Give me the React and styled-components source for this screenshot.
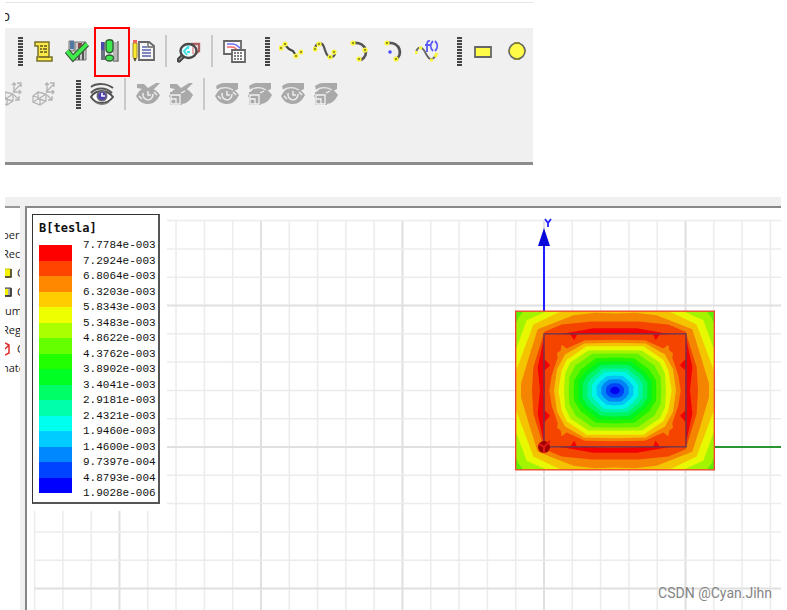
import React from 'react';
import styled, { createGlobalStyle } from 'styled-components';

const GlobalStyle = createGlobalStyle`
  * { box-sizing: border-box; }
  body { margin: 0; background: #fff; }
`;

const Page = styled.main`
  display: flex;
  flex-direction: column;
  min-height: 100vh;
  padding: 2px 6px 0 5px;
  font-family: 'Open Sans', 'Noto Sans', sans-serif;
`;

const Ribbon = styled.header`
  width: 68%;
  min-height: 163px;
  border-top: 1px solid #e4e4e4;
  border-bottom: 3px solid #8c8c8c;
  background: #f0f0f0;
  overflow: hidden;
`;

const MenuBar = styled.nav`
  height: 25px;
  background: #fff;
`;

const MenuItem = styled.a`
  display: flex;
  justify-content: flex-end;
  width: 5px;
  height: 20px;
  overflow: hidden;
  color: #222;
  font-size: 14px;
  line-height: 26px;
  text-decoration: none;
`;

const ToolRow = styled.div`
  display: flex;
  align-items: center;
  height: ${(p) => p.$height}px;
  margin-left: ${(p) => (p.$scrolled ? '-11px' : '0')};
`;

const ToolGroup = styled.div`
  display: flex;
  flex: none;
  align-items: center;
  margin-left: ${(p) => p.$lead || 0}px;
`;

const Grip = styled.span`
  width: 5px;
  height: 29px;
  margin-right: 4px;
  background: repeating-linear-gradient(#444 0 2px, #e4e4e4 2px 3px);
`;

const Separator = styled.span`
  width: 2px;
  height: 32px;
  margin: 0 5px 0 6px;
  background: #c9c9c9;
`;

const ToolButton = styled.button`
  display: flex;
  flex: none;
  align-items: center;
  justify-content: center;
  width: ${(p) => (p.$wide ? 34 : 33)}px;
  height: 32px;
  padding: 0;
  border: 0;
  background: none;
  position: relative;
`;

const Highlight = styled.span`
  position: absolute;
  inset: -8px -4px -10px 1px;
  border: 2px solid #f00;
  pointer-events: none;
`;

const Workspace = styled.section`
  display: flex;
  flex: 1;
  margin-top: 32px;
  border-top: 9px solid #f0f0f0;
`;

const TreePanel = styled.aside`
  width: 15px;
  padding-top: 17px;
  border-top: 2px solid #999;
  overflow: hidden;
`;

const TreeList = styled.ul`
  margin: 0;
  padding: 0;
  list-style: none;
`;

const TreeItem = styled.li`
  display: flex;
  align-items: center;
  gap: 5px;
  height: 19px;
  margin-left: ${(p) => (p.$cut ? '-3px' : '0')};
  color: #222;
  font-size: 11px;
  line-height: 19px;
  white-space: nowrap;

  svg { flex: none; }
`;

const Splitter = styled.div`
  width: 5px;
  background: #f0f0f0;
`;

const Viewport = styled.div`
  position: relative;
  flex: 1;
  min-height: 404px;
  border-top: 2px solid #888;
  border-left: 2px solid #888;
  overflow: hidden;
`;

const Scene = styled.svg`
  position: absolute;
  inset: 0;
  width: 100%;
  height: 100%;
`;

const LegendArea = styled.div`
  position: absolute;
  top: 0;
  left: 0;
  padding: 6px 7px 7px 5px;
  background: #fff;
`;

const LegendBox = styled.div`
  width: 128px;
  padding: 5px 0 1px 6px;
  border: 1px solid #333;
  border-right: 2px solid #555;
  border-bottom: 2px solid #555;
  color: #111;
`;

const LegendTitle = styled.h2`
  margin: 0;
  font-family: 'DejaVu Sans Mono', monospace;
  font-size: 12px;
  line-height: 16px;
`;

const LegendBody = styled.div`
  display: flex;
  gap: 11px;
`;

const ColorScale = styled.div`
  display: flex;
  flex: none;
  flex-direction: column;
  width: 33px;
  height: 248px;
  margin-top: 9px;
`;

const Swatch = styled.span`
  flex: 1;
  background: ${(p) => p.$color};
`;

const LegendValues = styled.ol`
  display: flex;
  flex-direction: column;
  justify-content: space-between;
  height: 263px;
  margin: 2px 0 0;
  padding: 0;
  font-family: 'Liberation Mono', monospace;
  font-size: 11px;
  line-height: 15px;
  list-style: none;
  white-space: nowrap;
`;

const Watermark = styled.span`
  position: absolute;
  right: 9px;
  bottom: 7px;
  color: #858585;
  font-family: Roboto, sans-serif;
  font-size: 14px;
  line-height: 20px;
`;

const Icon = ({ size = 24, children }) => (
  <svg width={size} height={size} viewBox="0 0 24 24" fill="none" aria-hidden="true">
    {children}
  </svg>
);

const ScriptIcon = () => (
  <Icon>
    <path d="M3 3h14v15h3v4H5v-4h1V7H3z" fill="#fbe94a" stroke="#77702a" strokeWidth="1.5" />
    <path d="M8 7h3M12 7h3M8 10h2M11 10h4M8 13h3M12 13h3M7 18h10" stroke="#5c5620" strokeWidth="1.3" />
  </Icon>
);

const ValidateIcon = () => (
  <Icon>
    <path d="M4 2h5v10H4zM10 3h11v18H10z" fill="#c9c9c9" stroke="#777" />
    <path d="M5 2h4v8H5z" fill="#5079a6" />
    <path d="M13 4h4v5h-4z" fill="#8b4a4a" />
    <path d="M18 7v14M14 16v5" stroke="#555" strokeWidth="2" />
    <path d="M2 12l6 7L22 5" stroke="#3b5c3b" strokeWidth="6" />
    <path d="M2 12l6 7L22 5" stroke="#3fea4c" strokeWidth="3.6" />
  </Icon>
);

const AnalyzeIcon = () => (
  <Icon>
    <path d="M3 3h4v18H3z" fill="#6b7380" />
    <path d="M3 3h3v8H3z" fill="#4a4aaa" />
    <path d="M15 3h5v18h-5z" fill="#b9b9b9" />
    <path d="M20 2v20h-5" stroke="#777" strokeWidth="1.5" />
    <path d="M8 3c0-3 7-3 7 0v7c0 5-7 5-7 0z" fill="#3fea4c" stroke="#345c38" strokeWidth="1.4" />
    <ellipse cx="11.5" cy="19" rx="4" ry="3" fill="#3fea4c" stroke="#345c38" strokeWidth="1.4" />
  </Icon>
);

const NotesIcon = () => (
  <Icon>
    <path d="M8 3h10l5 4v14H8z" fill="#f7f7f7" stroke="#666" strokeWidth="1.8" />
    <path d="M17 3v5h5" stroke="#666" strokeWidth="1.4" />
    <path d="M11 8h5M11 11h9M11 14h9M11 17h9" stroke="#5b63ad" strokeWidth="1.4" />
    <path d="M2 4h4v14l-2 4-2-4z" fill="#ffe92c" stroke="#9b8c2b" />
    <path d="M2 1h4v3H2z" fill="#f06262" />
    <path d="M3 19h2l-1 4z" fill="#333" />
  </Icon>
);

const MagnifierIcon = () => (
  <Icon>
    <path d="M14 5h8v7l-4 3" stroke="#b06060" strokeWidth="2.4" />
    <path d="M7 16l-5 5" stroke="#444" strokeWidth="5" strokeLinecap="round" />
    <path d="M7 16l-5 5" stroke="#888" strokeWidth="1.5" />
    <ellipse cx="11.5" cy="12" rx="8" ry="7" fill="#effcff" stroke="#484848" strokeWidth="2.4" />
    <path d="M12 7l-5 5 3 4M9 9h3M10 13h3" stroke="#3ee0e5" strokeWidth="2" />
    <path d="M16 8v7" stroke="#e69292" strokeWidth="1.5" />
  </Icon>
);

const ReportIcon = () => (
  <Icon>
    <path d="M1 2h17v13H1z" fill="#fafafa" stroke="#666" strokeWidth="1.8" />
    <path d="M4 5h6c4 0 5 3 7 4" stroke="#6b6bff" strokeWidth="1.5" />
    <path d="M4 8h5c4 0 5 3 6 6" stroke="#ff6868" strokeWidth="1.5" />
    <path d="M9 11h13v12H9z" fill="#fff" stroke="#666" strokeWidth="1.8" />
    <path d="M11 14h9M11 17h9M11 20h9" stroke="#555" strokeWidth="1.5" strokeDasharray="2 1" />
  </Icon>
);

const Dots = ({ points }) =>
  points.map(([x, y]) => (
    <g key={`${x}-${y}`}>
      <circle cx={x} cy={y} r="2.6" fill="#f9f53a" />
      <circle cx={x} cy={y} r="1" fill="#77751a" />
    </g>
  ));

const LineIcon = () => (
  <Icon>
    <path d="M6 6l4 4 4 2 4 6" stroke="#444" strokeWidth="2.2" />
    <Dots points={[[2, 9], [6, 5], [17, 17], [22, 13]]} />
  </Icon>
);

const SplineIcon = () => (
  <Icon>
    <path d="M2 9c1-5 7-7 9-1s3 10 7 10 4-3 4-6" stroke="#555" strokeWidth="2.2" />
    <Dots points={[[2, 10], [6, 5], [17, 18], [21, 13]]} />
  </Icon>
);

const ArcIcon = ({ center }) => (
  <Icon>
    <path d="M7 4c12-1 16 12 7 17" stroke="#555" strokeWidth="2.8" />
    <Dots points={center ? [[6, 4], [15, 20]] : [[6, 4], [18, 11], [12, 20]]} />
    {center && <circle cx="9" cy="13" r="1.8" fill="#4b4bff" />}
  </Icon>
);

const EquationIcon = () => (
  <Icon>
    <path d="M1 14c1-7 6-7 9-1s6 11 11 3" stroke="#666" strokeWidth="1.8" />
    <path d="M1 15v-3M4 9h3M15 21h3M20 18l2-4" stroke="#f9f53a" strokeWidth="3" />
    <path d="M15 2c-3-1-3 2-3 5v6M10 6h5M18 2c-3 3-3 7 0 10M20 2c3 3 3 7 0 10" stroke="#5959f5" strokeWidth="1.8" />
  </Icon>
);

const RectIcon = () => (
  <Icon>
    <path d="M4 8h16v10H4z" fill="#fffb46" stroke="#666" strokeWidth="1.8" />
  </Icon>
);

const CircleIcon = () => (
  <Icon>
    <circle cx="12" cy="12" r="8" fill="#fffb46" stroke="#666" strokeWidth="1.6" />
    <path d="M9 4h6M9 20h6M3 12h2M19 12h2" stroke="#85832c" strokeWidth="1.5" />
  </Icon>
);

const CubeAxesIcon = () => (
  <Icon>
    <g stroke="#b4b4b4" strokeWidth="1.3">
      <path d="M1 14l5-4 8 2v7l-6 4-7-3zM1 14l7 2 6-4M8 16v7M6 10v7l8 2M1 20l5-3" />
      <path d="M14 10l8-8M18 1h4v4M15 1v9M13 3l2-2 2 2M14 10h8M20 8l2 2-2 2M15 13l5 5M20 14v4h-4" />
    </g>
  </Icon>
);

const EyeIcon = () => (
  <Icon>
    <path d="M1 5c5-4 16-4 22 1M1 11c5-6 15-6 21 0" stroke="#555" strokeWidth="2" />
    <path d="M1 15c5-8 16-8 22 0-6 8-17 8-22 0z" fill="#fff" stroke="#4f4f4f" strokeWidth="2" />
    <circle cx="12" cy="14" r="5.5" fill="#6c6c7a" />
    <circle cx="12" cy="14" r="3.8" fill="#4d3fb0" />
    <path d="M12 11v3h3" stroke="#fff" strokeWidth="1.6" />
    <path d="M5 20c4 3 10 3 14 0" stroke="#777" strokeWidth="1.5" />
  </Icon>
);

const MutedEyeIcon = ({ checked, boxed }) => (
  <Icon>
    <path d="M0 14c4-7 6-8 12-8s9 3 12 7c-3 6-7 9-12 9S3 20 0 14z" fill="#a9a9a9" />
    {checked ? (
      <path d="M1 2h7l4 4 8-5h4l-9 9H9L6 7 1 6z" fill="#a9a9a9" />
    ) : (
      <path d="M1 4c3-2 5-3 8-3h14v6l-4 2C14 5 7 5 2 8z" fill="#a9a9a9" />
    )}
    {!checked && <path d="M2 8c5-3 11-3 16 0" stroke="#e6e6e6" strokeWidth="1.2" />}
    {boxed ? (
      <g>
        <path d="M1 10h12v13H1z" fill="#a9a9a9" />
        <path d="M2 13h9v9H2zM2 17h5v5M12 11l4-2" stroke="#f2f2f2" strokeWidth="1.3" />
      </g>
    ) : (
      <g stroke="#ededed" strokeWidth="1.5">
        <path d="M7 11c-1 9 10 9 10 1" />
        <path d="M12 9v4h3M3 14l3 3M18 10l3 3" />
      </g>
    )}
  </Icon>
);

const Tool = ({ label, wide, marked, children }) => (
  <ToolButton type="button" aria-label={label} $wide={wide}>
    {children}
    {marked && <Highlight />}
  </ToolButton>
);

const SCALE_COLORS = [
  '#ff0000', '#ff4400', '#ff8800', '#ffcc00', '#eeff00', '#aaff00', '#66ff00', '#22ff00',
  '#00ff22', '#00ff66', '#00ffaa', '#00ffee', '#00ccff', '#0088ff', '#0044ff', '#0000ff',
];

const SCALE_VALUES = [
  '7.7784e-003', '7.2924e-003', '6.8064e-003', '6.3203e-003', '5.8343e-003', '5.3483e-003',
  '4.8622e-003', '4.3762e-003', '3.8902e-003', '3.4041e-003', '2.9181e-003', '2.4321e-003',
  '1.9460e-003', '1.4600e-003', '9.7397e-004', '4.8793e-004', '1.9028e-006',
];

// One quadrant of every iso-band, listed from the vertical axis to the horizontal one.
const BANDS = [
  ['#5cf000', [[298, 238]]],
  ['#a4f400', [[275, 238], [290, 218], [298, 198]]],
  ['#e8f800', [[205, 238], [265, 211], [298, 121]]],
  ['#f5c400', [[140, 238], [170, 234], [245, 198], [298, 56]]],
  ['#f58500', [[0, 231], [60, 233], [125, 226], [232, 184], [255, 111], [282, 20], [282, 0]]],
  ['#f54400', [[0, 207], [70, 207], [160, 198], [212, 176], [245, 70], [249, 0]]],
  ['#f30000', [[0, 187], [65, 187], [150, 172], [212, 164], [220, 125], [232, 70], [225, 0]]],
  ['#f54400', [[0, 171], [114, 169], [122, 151], [134, 168], [212, 170], [212, 95], [195, 76], [211, 60], [211, 0]]],
  ['#f58500', [[0, 152], [90, 151], [145, 126], [160, 137], [163, 120], [174, 112], [172, 98], [190, 45], [197, 0]]],
  ['#f5c400', [[0, 143], [92, 141], [150, 108], [174, 64], [183, 0]]],
  ['#e8f800', [[0, 133], [85, 133], [145, 92], [160, 60], [170, 0]]],
  ['#a4f400', [[0, 121], [80, 120], [134, 84], [150, 50], [153, 0]]],
  ['#60f400', [[0, 111], [68, 110], [118, 76], [137, 40], [139, 0]]],
  ['#20f400', [[0, 99], [58, 97], [103, 62], [123, 30], [124, 0]]],
  ['#00f422', [[0, 88], [50, 86], [90, 55], [110, 28], [110, 0]]],
  ['#00f464', [[0, 78], [43, 76], [82, 46], [97, 22], [97, 0]]],
  ['#00f4a6', [[0, 66], [38, 65], [70, 38], [83, 20], [83, 0]]],
  ['#00f4e8', [[0, 57], [32, 55], [56, 34], [69, 16], [69, 0]]],
  ['#00c4f5', [[0, 45], [25, 43], [43, 28], [55, 13], [55, 0]]],
  ['#0084f5', [[0, 34], [18, 33], [33, 22], [41, 10], [41, 0]]],
  ['#0042f5', [[0, 22], [12, 21], [22, 14], [27, 7], [27, 0]]],
  ['#0000f0', [[0, 11], [7, 10], [14, 4], [14, 0]]],
];

const mirror = (quadrant) => {
  const back = [...quadrant].reverse();
  return [
    ...quadrant.map(([x, y]) => [x, -y]),
    ...back.map(([x, y]) => [x, y]),
    ...quadrant.map(([x, y]) => [-x, y]),
    ...back.map(([x, y]) => [-x, -y]),
  ].join(' ');
};

const range = (from, to) => Array.from({ length: to - from + 1 }, (_, i) => from + i);
const gridStroke = (k) => (k % 5 === 0 ? { stroke: '#e0e0e0', strokeWidth: 2 } : { stroke: '#ececec', strokeWidth: 1.5 });
const STEP = 28.3;

const FieldPlot = () => (
  <Scene role="img" aria-label="Magnetic flux density field">
    {range(-18, 60).map((k) => (
      <line key={`v${k}`} x1={517 + k * STEP} x2={517 + k * STEP} y1="12" y2="100%" {...gridStroke(k)} />
    ))}
    {range(-8, 40).map((k) => (
      <line key={`h${k}`} x1="7" x2="100%" y1={239 + k * STEP} y2={239 + k * STEP} {...gridStroke(k)} />
    ))}
    <path d="M517 103V35" stroke="#1d1dff" strokeWidth="2" />
    <path d="M517 20l6 18h-12z" fill="#0909d8" />
    <path d="M518 11l3 4 3-4M521 15v4" stroke="#2222ff" strokeWidth="1.8" fill="none" />
    <line x1="687" x2="100%" y1="239" y2="239" stroke="#2a962f" strokeWidth="2" />
    <g transform="translate(588 182.5) scale(0.3333)">
      {BANDS.map(([color, quadrant], i) => (
        <polygon key={i} points={mirror(quadrant)} fill={color} />
      ))}
      <rect x="-298" y="-238" width="596" height="476" fill="none" stroke="#f0442c" strokeWidth="4" />
      <rect x="-213" y="-170" width="426" height="339" fill="none" stroke="#683850" strokeWidth="4" />
    </g>
    <circle cx="517" cy="239" r="6" fill="#a00000" />
    <path d="M517 239l6-6M512 236l5 3v6" stroke="#e01818" strokeWidth="2" fill="none" />
  </Scene>
);

const TreeSheetIcon = ({ dark }) => (
  <svg width="7" height="10" viewBox="0 0 7 10" aria-hidden="true">
    <path d="M0 1h6v8H0z" fill={dark ? '#aaa' : '#f8f400'} stroke={dark ? '#444' : '#c9c400'} />
    <path d="M0 2h3v6H0z" fill="#f8f400" />
    <path d="M6 1v8H0" fill="none" stroke="#333" strokeWidth="1.5" />
  </svg>
);

const TreeSolidIcon = () => (
  <svg width="7" height="14" viewBox="0 0 7 14" aria-hidden="true">
    <path d="M0 1l4 2v8l-4 2M0 7l4-4" fill="none" stroke="#e22c2c" strokeWidth="1.5" />
  </svg>
);

export default function App() {
  return (
    <Page>
      <GlobalStyle />
      <Ribbon>
        <MenuBar>
          <MenuItem href="#help">p</MenuItem>
        </MenuBar>
        <ToolRow $height={46}>
          <ToolGroup $lead={13}>
            <Grip />
            <Tool label="Script"><ScriptIcon /></Tool>
            <Tool label="Validate"><ValidateIcon /></Tool>
            <Tool label="Analyze all" marked><AnalyzeIcon /></Tool>
            <Tool label="Edit notes"><NotesIcon /></Tool>
            <Separator />
            <Tool label="Solution data"><MagnifierIcon /></Tool>
            <Separator />
            <Tool label="Create report"><ReportIcon /></Tool>
          </ToolGroup>
          <ToolGroup $lead={14}>
            <Grip />
            <Tool label="Draw line" wide><LineIcon /></Tool>
            <Tool label="Draw spline" wide><SplineIcon /></Tool>
            <Tool label="Draw three point arc" wide><ArcIcon /></Tool>
            <Tool label="Draw center point arc" wide><ArcIcon center /></Tool>
            <Tool label="Draw equation curve" wide><EquationIcon /></Tool>
          </ToolGroup>
          <ToolGroup $lead={13}>
            <Grip />
            <Tool label="Draw rectangle" wide><RectIcon /></Tool>
            <Tool label="Draw circle" wide><CircleIcon /></Tool>
          </ToolGroup>
        </ToolRow>
        <ToolRow $height={40} $scrolled>
          <ToolGroup>
            <Tool label="Move axes"><CubeAxesIcon /></Tool>
            <Tool label="Rotate axes"><CubeAxesIcon /></Tool>
          </ToolGroup>
          <ToolGroup $lead={16}>
            <Grip />
            <Tool label="Visibility"><EyeIcon /></Tool>
            <Separator />
            <Tool label="Hide selection"><MutedEyeIcon checked /></Tool>
            <Tool label="Hide selection in view"><MutedEyeIcon checked boxed /></Tool>
            <Separator />
            <Tool label="Show selection"><MutedEyeIcon /></Tool>
            <Tool label="Show selection in view"><MutedEyeIcon boxed /></Tool>
            <Tool label="Show all"><MutedEyeIcon /></Tool>
            <Tool label="Show all in view"><MutedEyeIcon boxed /></Tool>
          </ToolGroup>
        </ToolRow>
      </Ribbon>
      <Workspace>
        <TreePanel>
          <TreeList>
            <TreeItem $cut>per</TreeItem>
            <TreeItem $cut>Rec</TreeItem>
            <TreeItem><TreeSheetIcon />C</TreeItem>
            <TreeItem><TreeSheetIcon dark />C</TreeItem>
            <TreeItem>um</TreeItem>
            <TreeItem $cut>Reg</TreeItem>
            <TreeItem><TreeSolidIcon />C</TreeItem>
            <TreeItem $cut>nate</TreeItem>
          </TreeList>
        </TreePanel>
        <Splitter />
        <Viewport>
          <FieldPlot />
          <LegendArea>
            <LegendBox>
              <LegendTitle>B[tesla]</LegendTitle>
              <LegendBody>
                <ColorScale>
                  {SCALE_COLORS.map((color) => <Swatch key={color} $color={color} />)}
                </ColorScale>
                <LegendValues>
                  {SCALE_VALUES.map((value) => <li key={value}>{value}</li>)}
                </LegendValues>
              </LegendBody>
            </LegendBox>
          </LegendArea>
          <Watermark>CSDN @Cyan.Jihn</Watermark>
        </Viewport>
      </Workspace>
    </Page>
  );
}
